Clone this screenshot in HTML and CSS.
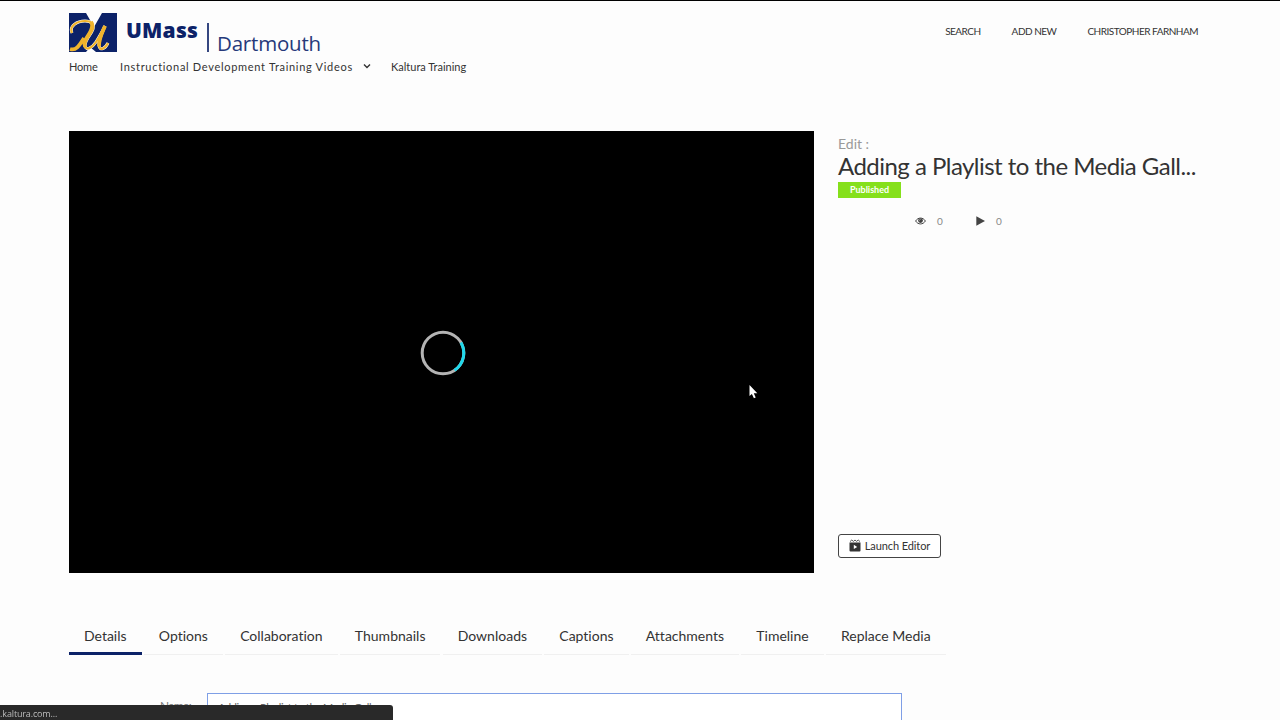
FILE: index.html
```html
<!DOCTYPE html>
<html lang="en">
<head>
    <meta charset="UTF-8">
    <meta name="viewport" content="width=device-width, initial-scale=1.0">
    <title>Edit Media - UMass Dartmouth</title>
    <link rel="stylesheet" href="styles.css">
</head>
<body>

    <header class="header">
        <div class="top-bar">
            <a class="logo" href="#">
                <svg class="logo-mark" width="48" height="39" viewBox="0 0 48 39">
                    <path d="M0 0h17l8 14 8-14h15v39H0z" fill="#0c2268"/>
                    <path d="M17 39l4-5 6 5z" fill="#fff"/>
                    <path d="M3 20C0 13 8 8 16 8c7 0 9 3 8 8-2 6-8 10-8 17 1 5 7 2 11-4 4-6 6-10 9-16-3 8-7 14-6 20 1 5 6 3 9-3" fill="none" stroke="#fff" stroke-width="3"/>
                    <path d="M3 20C0 13 8 8 16 8c7 0 9 3 8 8-2 6-8 10-8 17 1 5 7 2 11-4 4-6 6-10 9-16-3 8-7 14-6 20 1 5 6 3 9-3" fill="none" stroke="#f0b42c" stroke-width="2.2"/>
                    <path d="M22 9c4 5-2 12-5 17-2 4-2 7 0 8M36 13c-3 7-6 12-6 20M1 36c6 2 9-3 14-11" fill="none" stroke="#f0b42c" stroke-width="3.8"/>
                </svg>
                <span class="logo-name">UMass</span>
                <span class="logo-line"></span>
                <span class="logo-campus">Dartmouth</span>
            </a>
            <div class="user-menu">
                <a class="search-link" href="#">SEARCH</a>
                <a class="add-link" href="#">ADD NEW</a>
                <a class="user-link" href="#">CHRISTOPHER FARNHAM</a>
            </div>
        </div>
        <nav class="main-nav">
            <a class="nav-home" href="#">Home</a>
            <a class="nav-videos" href="#">Instructional Development Training Videos</a>
            <svg class="chevron" width="8" height="6" viewBox="0 0 8 6">
                <path d="M1 1.5l3 3 3-3" fill="none" stroke="#333" stroke-width="1.4"/>
            </svg>
            <a class="nav-training" href="#">Kaltura Training</a>
        </nav>
    </header>

    <main>
        <section class="media">
            <div class="player">
                <svg class="spinner" width="46" height="46" viewBox="0 0 46 46">
                    <circle cx="23" cy="23" r="20.8" fill="none" stroke="#b4b4b4" stroke-width="3"/>
                    <path d="M41 12.6A20.8 20.8 0 0 1 34.5 40.3" fill="none" stroke="#1fd9ec" stroke-width="3"/>
                </svg>
            </div>
            <div class="media-info">
                <p class="edit-label">Edit :</p>
                <h1>Adding a Playlist to the Media Gall...</h1>
                <span class="status">Published</span>
                <div class="stats">
                    <svg width="11" height="8" viewBox="0 0 11 8">
                        <path d="M.6 4C3 .1 8 .1 10.4 4 8 7.9 3 7.9.6 4z" fill="#fff" stroke="#444"/>
                        <circle cx="5.5" cy="3.6" r="2.4" fill="#444"/>
                        <path d="M4.4 3.6c0-.7.4-1.1 1.1-1.1" fill="none" stroke="#ddd" stroke-width=".6"/>
                    </svg>
                    <span class="views">0</span>
                    <svg width="10" height="10" viewBox="0 0 10 10">
                        <path d="M.3.2L9 5 .3 9.8z" fill="#444"/>
                    </svg>
                    <span class="plays">0</span>
                </div>
                <button type="button" class="launch">
                    <svg width="12" height="13" viewBox="0 0 12 13">
                        <path d="M1 2.6L2.8 1l1.6 1.4L6 1l1.6 1.4L9.2 1 11 2.6" fill="none" stroke="#555" stroke-width="1"/>
                        <path d="M.5 3.6h11v7.8q0 1-1 1h-9q-1 0-1-1z" fill="#333"/>
                        <path d="M4.8 5.8v4.2l3.4-2.1z" fill="#fff"/>
                    </svg>
                    <span>Launch Editor</span>
                </button>
            </div>
        </section>

        <nav class="tabs">
            <a class="tab active" href="#">Details</a>
            <a class="tab" href="#">Options</a>
            <a class="tab" href="#">Collaboration</a>
            <a class="tab" href="#">Thumbnails</a>
            <a class="tab" href="#">Downloads</a>
            <a class="tab" href="#">Captions</a>
            <a class="tab" href="#">Attachments</a>
            <a class="tab" href="#">Timeline</a>
            <a class="tab" href="#">Replace Media</a>
        </nav>

        <form class="details-form">
            <label for="name">Name:</label>
            <input type="text" id="name" name="name" value="Adding a Playlist to the Media Gallery">
        </form>
    </main>

    <div class="browser-status">i.kaltura.com...</div>

    <svg class="cursor" width="10" height="16" viewBox="0 0 10 16">
        <path d="M.5 1v11l2.4-2 2 4.2 1.8-.8-1.9-4.1h3.5z" fill="#fff"/>
    </svg>

</body>
</html>
```
FILE: styles.css
```css
* {
    margin: 0;
    padding: 0;
    box-sizing: border-box;
}

body {
    font-family: Lato, sans-serif;
    font-variant-ligatures: none;
    background-color: #fdfdfd;
    color: #333;
    height: 720px;
    overflow: hidden;
    border-top: 1px solid #000;
}

a {
    color: inherit;
    text-decoration: none;
    white-space: nowrap;
}

svg {
    display: block;
    flex-shrink: 0;
}

/* Header */
.header {
    padding: 12px 82px 0 69px;
    height: 130px;
}

.top-bar {
    display: flex;
    justify-content: space-between;
    height: 40px;
}

.logo {
    display: flex;
    color: #0c2268;
    font-family: "Open Sans", sans-serif;
}

.logo-name {
    width: 72px;
    margin-left: 9px;
    font-size: 21px;
    line-height: 35px;
    font-weight: 800;
    letter-spacing: 0.2px;
}

.logo-line {
    width: 2px;
    height: 29px;
    margin: 10px 8px 0 9px;
    background-color: #354780;
}

.logo-campus {
    padding-top: 16px;
    color: #26397a;
    font-size: 20.5px;
    line-height: 28px;
    font-weight: 400;
    letter-spacing: -0.2px;
}

.user-menu {
    display: flex;
    gap: 31px;
    padding-top: 10px;
    font-size: 10px;
    line-height: 16px;
    letter-spacing: -0.5px;
}

.main-nav {
    display: flex;
    align-items: center;
    height: 26px;
    font-size: 11px;
}

.nav-home {
    width: 51px;
    letter-spacing: -0.2px;
}

.nav-videos {
    width: 243px;
    letter-spacing: 0.7px;
}

.nav-training {
    margin-left: 20px;
}

/* Player and media info */
.media {
    display: flex;
    padding-left: 69px;
}

.player {
    display: flex;
    align-items: center;
    justify-content: center;
    width: 745px;
    height: 442px;
    padding: 2px 0 0 3px;
    background-color: #000;
}

.media-info {
    display: flex;
    flex-direction: column;
    align-items: flex-start;
    width: 380px;
    height: 427px;
    margin-left: 24px;
}

.edit-label {
    padding-top: 4px;
    color: #999;
    font-size: 14px;
    line-height: 17px;
}

h1 {
    font-size: 24px;
    line-height: 28px;
    font-weight: 400;
    letter-spacing: -0.53px;
    white-space: nowrap;
}

.status {
    width: 63px;
    height: 16px;
    margin-top: 2px;
    background-color: #85e01b;
    color: #fff;
    font-size: 9px;
    font-weight: 700;
    line-height: 15px;
    text-align: center;
}

.stats {
    display: flex;
    align-items: center;
    height: 16px;
    margin: 15px 0 0 77px;
    color: #888;
    font-size: 10px;
}

.views {
    width: 39px;
    padding-left: 11px;
    margin-right: 11px;
}

.plays {
    padding-left: 10px;
}

.launch {
    display: flex;
    align-items: center;
    justify-content: center;
    gap: 4px;
    width: 103px;
    height: 24px;
    margin-top: auto;
    padding-bottom: 2px;
    border: 1px solid #444;
    border-radius: 3px;
    background-color: #fff;
    color: #333;
    font-family: inherit;
    font-size: 11px;
    letter-spacing: -0.1px;
}

/* Tabs */
.tabs {
    display: flex;
    gap: 2.25px;
    padding: 47px 0 0 69px;
}

.tab {
    height: 35px;
    padding: 0 15px;
    border-bottom: 1px solid #f0f0f0;
    font-size: 14px;
    line-height: 32px;
}

.tab.active {
    border-bottom: 3px solid #0c2268;
}

/* Details form */
.details-form {
    display: flex;
    padding: 38px 0 0 160px;
}

.details-form label {
    width: 47px;
    padding-top: 3px;
    color: #777;
    font-size: 12px;
    line-height: 20px;
    letter-spacing: -0.6px;
}

.details-form input {
    width: 695px;
    height: 29px;
    padding: 0 10px;
    border: 1px solid #7f9fe6;
    background-color: #fff;
    color: #666;
    font-family: inherit;
    font-size: 11px;
    letter-spacing: -0.35px;
    outline: none;
}

.browser-status {
    position: fixed;
    left: 0;
    bottom: 0;
    width: 393px;
    height: 15px;
    border-top-right-radius: 3px;
    background-color: #292929;
    color: #bbb;
    font-family: "Open Sans", sans-serif;
    font-size: 9px;
    line-height: 17px;
    letter-spacing: -0.15px;
    text-indent: -2px;
}

.cursor {
    position: absolute;
    left: 749px;
    top: 384px;
}
```
